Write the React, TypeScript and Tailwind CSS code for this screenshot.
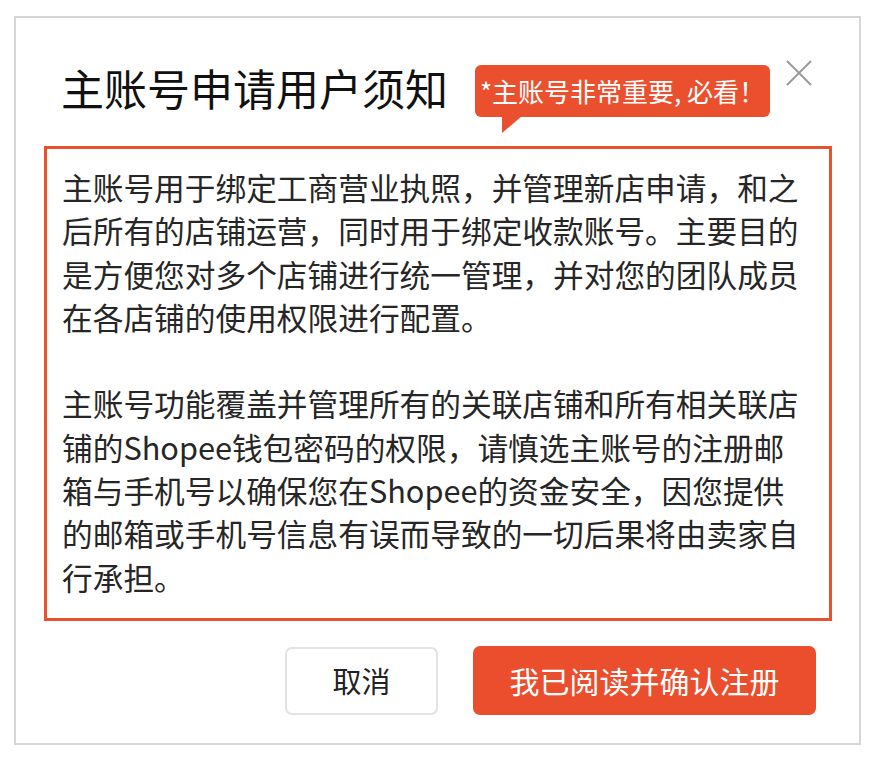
const font = { fontFamily: '"Noto Sans CJK SC", "Noto Sans", sans-serif' };

const CloseIcon = () => (
  <svg width="26" height="26" viewBox="0 0 26 26" className="text-[#9a9a9a]">
    <path d="M1 1 L25 25 M25 1 L1 25" stroke="currentColor" strokeWidth="2" fill="none" />
  </svg>
);

const Tip = () => (
  <div className="relative ml-[27px] mt-[7px] flex h-[52px] w-[295px] shrink-0 items-center justify-center whitespace-nowrap rounded-[6px] bg-[#ea502e] text-[26px] leading-none text-white">
    *主账号非常重要,&nbsp;必看！
    <svg
      width="20"
      height="18"
      viewBox="0 0 20 18"
      className="absolute left-[27px] top-[51px]"
    >
      <path d="M0 0 L20 0 L0 17 Z" fill="#ea502e" />
    </svg>
  </div>
);

export default function App() {
  return (
    <div className="h-[761px] w-[871px] bg-white pl-[14px] pt-[16px]" style={font}>
      <div className="relative h-[729px] w-[847px] border-2 border-[#d6d6d6] bg-white">
        <button className="absolute left-[770px] top-[42px]">
          <CloseIcon />
        </button>

        <div className="flex items-start pl-[45px] pt-[40px]">
          <h1 className="shrink-0 whitespace-nowrap text-[43px] font-normal leading-[58px] text-[#111]">
            主账号申请用户须知
          </h1>
          <Tip />
        </div>

        <div className="ml-[28px] mt-[29px] h-[475px] w-[788px] border-[3px] border-[#e9502e] pl-[15px] pt-[16px]">
          <p className="whitespace-nowrap text-[30.7px] leading-[43.3px] text-[#262626]">
            主账号用于绑定工商营业执照，并管理新店申请，和之
            <br />
            后所有的店铺运营，同时用于绑定收款账号。主要目的
            <br />
            是方便您对多个店铺进行统一管理，并对您的团队成员
            <br />
            在各店铺的使用权限进行配置。
            <br />
            <br />
            主账号功能覆盖并管理所有的关联店铺和所有相关联店
            <br />
            铺的Shopee钱包密码的权限，请慎选主账号的注册邮
            <br />
            箱与手机号以确保您在Shopee的资金安全，因您提供
            <br />
            的邮箱或手机号信息有误而导致的一切后果将由卖家自
            <br />
            行承担。
          </p>
        </div>

        <div className="mt-[25px] flex items-center justify-end gap-[35px] pr-[43px]">
          <button className="h-[68px] w-[153px] rounded-[7px] border-2 border-[#e3e3e3] bg-white text-[29px] text-[#222]">
            取消
          </button>
          <button className="h-[69px] w-[343px] rounded-[7px] bg-[#ea4e2c] text-[30px] text-white">
            我已阅读并确认注册
          </button>
        </div>
      </div>
    </div>
  );
}
